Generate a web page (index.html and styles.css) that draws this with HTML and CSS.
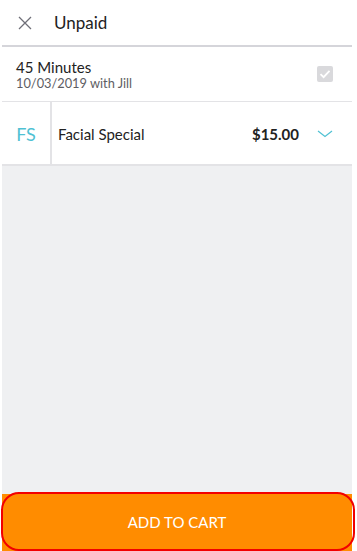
FILE: index.html
```html
<!DOCTYPE html>
<html>
<head>
<meta charset="utf-8">
<link rel="stylesheet" href="styles.css">
</head>
<body>
<div class="app">
  <header class="header">
    <svg class="close" width="14" height="14" viewBox="0 0 14 14"><path d="M1 1L13 13M13 1L1 13" stroke="#6f6f78" stroke-width="1.3" fill="none"/></svg>
    <span class="title">Unpaid</span>
  </header>
  <div class="appt">
    <div class="appt-text">
      <div class="appt-dur">45 Minutes</div>
      <div class="appt-sub">10/03/2019 with Jill</div>
    </div>
    <span class="check"><svg width="16" height="16" viewBox="0 0 16 16"><path d="M3.5 8.2L6.6 11.2L12.5 4.8" stroke="#fff" stroke-width="1.8" fill="none"/></svg></span>
  </div>
  <div class="item">
    <div class="initials">FS</div>
    <div class="item-main">
      <span class="item-name">Facial Special</span>
      <span class="item-price">$15.00</span>
      <svg class="chev" width="16" height="8" viewBox="0 0 16 8"><path d="M1 1L8 6.5L15 1" stroke="#4fc1d3" stroke-width="1.2" fill="none"/></svg>
    </div>
  </div>
  <div class="filler"></div>
  <button class="cart">ADD TO CART</button>
</div>
</body>
</html>
```
FILE: styles.css
```css
html, body { margin: 0; padding: 0; background: #fff; }
body { font-family: Lato, "Open Sans", sans-serif; }
.app {
  width: 350px;
  height: 551px;
  margin-left: 2px;
  display: flex;
  flex-direction: column;
  position: relative;
}
.header {
  height: 45px;
  display: flex;
  align-items: center;
  border-bottom: 2px solid #d5d5da;
  padding-left: 16px;
  box-sizing: content-box;
}
.close { margin-right: 22px; margin-top: 1px; }
.title { font-size: 17px; color: #222; }
.appt {
  height: 54px;
  display: flex;
  align-items: center;
  padding: 0 19px 0 14px;
  border-bottom: 1px solid #e3e3e6;
}
.appt-text { flex: 1; }
.appt-dur { font-size: 15px; color: #222; line-height: 17px; margin-top: 1px; }
.appt-sub { font-size: 12.8px; color: #5d5d63; line-height: 14px; }
.check {
  width: 16px; height: 16px; border-radius: 2px;
  background: #d9d9dc;
  display: flex;
}
.item {
  height: 62px;
  display: flex;
  border-bottom: 2px solid #e3e3e6;
}
.initials {
  width: 48px;
  border-right: 2px solid #e3e3e6;
  display: flex;
  align-items: center;
  justify-content: center;
  font-size: 18px;
  color: #4fc1d3;
  padding-top: 1px;
}
.item-main {
  flex: 1;
  display: flex;
  align-items: center;
  padding: 1px 19px 0 6px;
}
.item-name { flex: 1; font-size: 15px; color: #222; }
.item-price { font-size: 15px; font-weight: bold; color: #222; margin-right: 18px; }
.chev { margin-top: 1px; }
.filler { flex: 1; background: #eff0f2; }
.cart {
  height: 57px;
  border: none;
  background: #ff8c00;
  color: #fff;
  font-family: Lato, sans-serif;
  font-size: 15px;
  padding: 0 0 2px 0;
  margin: 0;
  position: relative;
  overflow: visible;
}
.cart::after {
  content: "";
  position: absolute;
  left: -1px; right: -3px; top: -2px; bottom: 0;
  border: 2.5px solid #f20000;
  border-radius: 18px;
}
```
